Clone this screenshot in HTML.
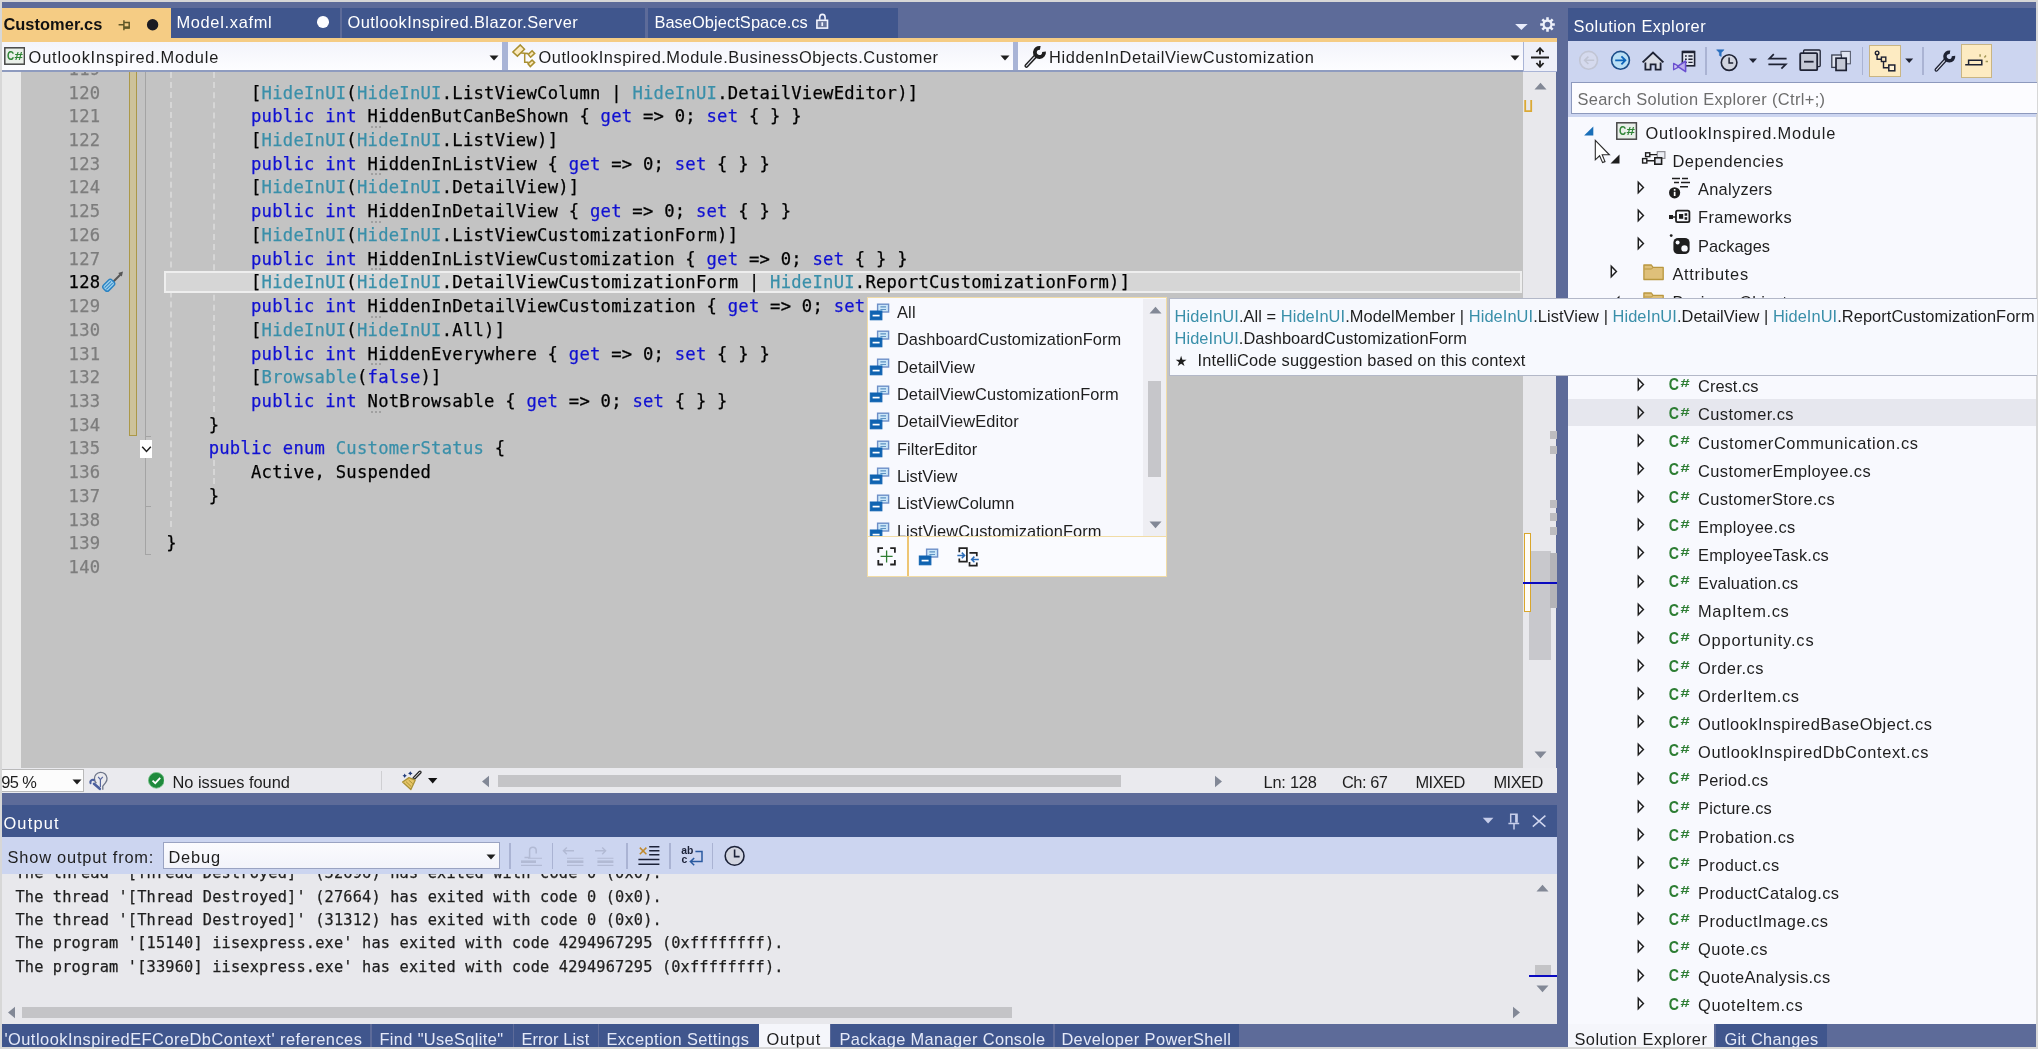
<!DOCTYPE html>
<html lang="en"><head><meta charset="utf-8"><title>Customer.cs - Visual Studio</title><style>
html,body{margin:0;padding:0;}
body{width:2038px;height:1049px;overflow:hidden;background:#d7d7d7;position:relative;font-family:"Liberation Sans", "DejaVu Sans", sans-serif;}
#app{position:absolute;left:0;top:0;width:2038px;height:1049px;overflow:hidden;will-change:transform;}
.b{position:absolute;display:block;}
.t{position:absolute;white-space:pre;display:block;}
.m{font-family:"DejaVu Sans Mono", "Liberation Mono", monospace;-webkit-text-stroke:0.25px currentColor;}
.d{font-family:"DejaVu Sans",sans-serif;}
</style></head>
<body>
<div id="app">
<div class="b" style="left:2.00px;top:2.00px;width:2034.00px;height:1045.00px;background:#5d6b99;"></div>
<div class="b" style="left:2.00px;top:7.50px;width:168.50px;height:34.00px;background:#f5cc84;"></div>
<span class="t" style="left:3.40px;top:13.00px;font-size:16.4px;line-height:22px;color:#111;font-weight:bold;letter-spacing:0.055px;">Customer.cs</span>
<svg class="b" style="left:116.00px;top:17.00px;" width="44.00" height="16.00" viewBox="116.00 17.00 44.00 16.00"><path d="M118.6 24.8 H123.4 M123.9 20.2 V30.2 M123.9 22.4 H129.2 V28 H123.9" fill="none" stroke="#5f5626" stroke-width="1.5"/><path d="M123.9 27.4 H129.2" stroke="#5f5626" stroke-width="2.2"/><circle cx="152.6" cy="24.8" r="5.7" fill="#1a1a22"/></svg>
<div class="b" style="left:170.50px;top:8.00px;width:169.50px;height:30.00px;background:#40568d;"></div>
<span class="t" style="left:176.40px;top:11.00px;font-size:16.4px;line-height:22px;color:#fff;letter-spacing:0.695px;">Model.xafml</span>
<div class="b" style="left:317.10px;top:16.45px;width:11.60px;height:11.60px;background:#fdfdff;border-radius:50%;"></div>
<div class="b" style="left:342.00px;top:8.00px;width:303.00px;height:30.00px;background:#40568d;"></div>
<span class="t" style="left:347.60px;top:11.00px;font-size:16.4px;line-height:22px;color:#fff;letter-spacing:0.440px;">OutlookInspired.Blazor.Server</span>
<div class="b" style="left:648.00px;top:8.00px;width:250.00px;height:30.00px;background:#40568d;"></div>
<span class="t" style="left:654.40px;top:11.00px;font-size:16.4px;line-height:22px;color:#fff;letter-spacing:0.075px;">BaseObjectSpace.cs</span>
<svg class="b" style="left:812.00px;top:11.00px;" width="20.00" height="21.00" viewBox="812.00 11.00 20.00 21.00"><path d="M819.7 19.8 V17.4 A2.7 3 0 0 1 825.1 17.4 V19.8" fill="none" stroke="#f2f4ff" stroke-width="1.6"/><rect x="816.9" y="20.3" width="10.6" height="7.8" fill="#67749a" stroke="#f2f4ff" stroke-width="1.6"/><rect x="821.4" y="22.3" width="1.7" height="3.8" fill="#f2f4ff"/></svg>
<div class="b" style="left:2.00px;top:38.00px;width:1554.50px;height:3.60px;background:#f5cc84;"></div>
<svg class="b" style="left:1513.00px;top:22.00px;" width="17.00" height="10.00" viewBox="1513.00 22.00 17.00 10.00"><path d="M1515.1 23.9 H1527.7 L1521.4 30 Z" fill="#e8ecfb"/></svg>
<svg class="b" style="left:1539.00px;top:15.50px;" width="17" height="17" viewBox="0 0 20 20"><path d="M15.20 10.00 L18.60 10.00 M13.68 13.68 L16.08 16.08 M10.00 15.20 L10.00 18.60 M6.32 13.68 L3.92 16.08 M4.80 10.00 L1.40 10.00 M6.32 6.32 L3.92 3.92 M10.00 4.80 L10.00 1.40 M13.68 6.32 L16.08 3.92" stroke="#eef1fa" stroke-width="3" fill="none"/><circle cx="10" cy="10" r="4.6" fill="none" stroke="#eef1fa" stroke-width="2.6"/></svg>
<div class="b" style="left:2.00px;top:41.60px;width:1554.50px;height:30.40px;background:#a9b4d6;"></div>
<div class="b" style="left:2.00px;top:42.00px;width:499.70px;height:28.00px;background:linear-gradient(#f3f4fb,#fdfdff);border-bottom:1px solid #e4e7f3;"></div>
<div class="b" style="left:508.00px;top:42.00px;width:504.50px;height:28.00px;background:linear-gradient(#f3f4fb,#fdfdff);border-bottom:1px solid #e4e7f3;"></div>
<div class="b" style="left:1018.00px;top:42.00px;width:504.50px;height:28.00px;background:linear-gradient(#f3f4fb,#fdfdff);border-bottom:1px solid #e4e7f3;"></div>
<div class="b" style="left:1524.00px;top:42.00px;width:32.50px;height:29.00px;background:#eef0f9;"></div>
<div class="b" style="left:2.00px;top:70.40px;width:1521.00px;height:1.80px;background:#8e9bbf;"></div>
<svg class="b" style="left:489.00px;top:54.50px;" width="10" height="6" viewBox="0 0 10 6"><path d="M0.5 0.5 L9.5 0.5 L5 5.5 Z" fill="#1e1e1e"/></svg>
<svg class="b" style="left:1000.00px;top:54.50px;" width="10" height="6" viewBox="0 0 10 6"><path d="M0.5 0.5 L9.5 0.5 L5 5.5 Z" fill="#1e1e1e"/></svg>
<svg class="b" style="left:1509.50px;top:54.50px;" width="10" height="6" viewBox="0 0 10 6"><path d="M0.5 0.5 L9.5 0.5 L5 5.5 Z" fill="#1e1e1e"/></svg>
<svg class="b" style="left:4.00px;top:46.50px;" width="21" height="19" viewBox="0 0 21 19"><rect x="0.8" y="0.8" width="19.6" height="16.4" fill="#e9efe9" stroke="#474747" stroke-width="1.5"/><text x="3.1" y="13.4" font-family="Liberation Sans, sans-serif" font-weight="bold" font-size="12.2" fill="#2f8436" textLength="7.2" lengthAdjust="spacingAndGlyphs">C</text><text x="10.4" y="12.5" font-family="Liberation Sans, sans-serif" font-weight="bold" font-size="11.2" fill="#2f8436" textLength="8.4" lengthAdjust="spacingAndGlyphs">#</text></svg>
<span class="t" style="left:28.60px;top:46.00px;font-size:16.4px;line-height:22px;color:#1e1e1e;letter-spacing:0.790px;">OutlookInspired.Module</span>
<svg class="b" style="left:510.00px;top:43.00px;" width="28.00" height="27.00" viewBox="510.00 43.00 28.00 27.00"><g fill="#fbe9bd" stroke="#a98f30" stroke-width="1.5" stroke-linejoin="miter"><path d="M521.2 52.9 L528.3 53.6 M524.7 53.4 V62.2 H528.6" fill="none"/><path d="M520.3 44.9 L524.5 49.3 L517.4 56.1 L512.9 52 Z"/><path d="M532.1 50.8 L534.7 53.4 L530.6 57.2 L528.3 54.4 Z"/><path d="M532.1 60.1 L534.6 62.4 L530.3 66.6 L528 63.8 Z"/></g></svg>
<span class="t" style="left:538.60px;top:46.00px;font-size:16.4px;line-height:22px;color:#1e1e1e;letter-spacing:0.525px;">OutlookInspired.Module.BusinessObjects.Customer</span>
<svg class="b" style="left:1023.00px;top:44.50px;" width="24" height="24" viewBox="0 0 24 24"><path d="M3.4 20.8 L12.8 10.8" stroke="#1e1e1e" stroke-width="4" stroke-linecap="round" fill="none"/><path d="M3.4 20.8 L12.4 11.2" stroke="#e4e6f0" stroke-width="1.2" stroke-linecap="round" fill="none"/><path d="M21 6.7 A4.6 4.6 0 1 1 17.3 2.9" fill="none" stroke="#1e1e1e" stroke-width="3.8"/></svg>
<span class="t" style="left:1049.00px;top:46.00px;font-size:16.4px;line-height:22px;color:#1e1e1e;letter-spacing:0.609px;">HiddenInDetailViewCustomization</span>
<svg class="b" style="left:1530.00px;top:47.00px;" width="20" height="21" viewBox="0 0 20 21"><path d="M1 10.5 H19" stroke="#1e1e1e" stroke-width="2"/><path d="M10 1.5 V7.6 M10 13.4 V19.5" stroke="#1e1e1e" stroke-width="1.8"/><path d="M6.4 5 L10 1.2 L13.6 5 M6.4 16 L10 19.8 L13.6 16" fill="none" stroke="#1e1e1e" stroke-width="1.8"/></svg>
<div class="b" style="left:2px;top:72px;width:1520.8px;height:695.6px;background:#c3c3c3;overflow:hidden;">
<div class="b" style="left:0.00px;top:0.00px;width:19.30px;height:695.60px;background:#eaeaea;"></div>
<div class="b" style="left:127.20px;top:0.00px;width:7.40px;height:364.30px;background:#cdc29a;border-left:1.6px solid #ab9848;border-right:1.6px solid #ab9848;border-bottom:1.6px solid #ab9848;box-sizing:border-box;"></div>
<div class="b" style="left:143.20px;top:0.00px;width:1.30px;height:482.50px;background:#a4a4a4;"></div>
<div class="b" style="left:143.20px;top:364.00px;width:6.20px;height:1.20px;background:#a4a4a4;"></div>
<div class="b" style="left:143.20px;top:434.30px;width:6.20px;height:1.20px;background:#a4a4a4;"></div>
<div class="b" style="left:143.20px;top:482.00px;width:6.20px;height:1.20px;background:#a4a4a4;"></div>
<div class="b" style="left:167.60px;top:0.00px;width:0;height:455.00px;border-left:2px dashed #d6d6d6;"></div>
<div class="b" style="left:210.60px;top:0.00px;width:0;height:340.00px;border-left:2px dashed #d6d6d6;"></div>
<div class="b" style="left:210.60px;top:388.00px;width:0;height:24.00px;border-left:2px dashed #d6d6d6;"></div>
<div class="b" style="left:162.00px;top:199.00px;width:1357.50px;height:21.60px;background:#d6d6d6;border:2px solid #eeeeee;box-sizing:border-box;"></div>
<div class="b" style="left:137.60px;top:367.80px;width:12.60px;height:17.80px;background:#ffffff;"></div>
<svg class="b" style="left:138.60px;top:372.50px;" width="11" height="9" viewBox="0 0 11 9"><path d="M1.2 1.8 L5.5 6.4 L9.8 1.8" fill="none" stroke="#1e1e1e" stroke-width="1.5"/></svg>
<span class="t m" style="left:66.60px;top:-15.00px;font-size:17.2px;line-height:24px;color:#7d7d7d;letter-spacing:0.245px;">119</span>
<span class="t m" style="left:66.60px;top:9.00px;font-size:17.2px;line-height:24px;color:#7d7d7d;letter-spacing:0.245px;">120</span>
<span class="t m" style="left:66.60px;top:32.00px;font-size:17.2px;line-height:24px;color:#7d7d7d;letter-spacing:0.245px;">121</span>
<span class="t m" style="left:66.60px;top:56.00px;font-size:17.2px;line-height:24px;color:#7d7d7d;letter-spacing:0.245px;">122</span>
<span class="t m" style="left:66.60px;top:80.00px;font-size:17.2px;line-height:24px;color:#7d7d7d;letter-spacing:0.245px;">123</span>
<span class="t m" style="left:66.60px;top:103.00px;font-size:17.2px;line-height:24px;color:#7d7d7d;letter-spacing:0.245px;">124</span>
<span class="t m" style="left:66.60px;top:127.00px;font-size:17.2px;line-height:24px;color:#7d7d7d;letter-spacing:0.245px;">125</span>
<span class="t m" style="left:66.60px;top:151.00px;font-size:17.2px;line-height:24px;color:#7d7d7d;letter-spacing:0.245px;">126</span>
<span class="t m" style="left:66.60px;top:175.00px;font-size:17.2px;line-height:24px;color:#7d7d7d;letter-spacing:0.245px;">127</span>
<span class="t m" style="left:66.60px;top:198.00px;font-size:17.2px;line-height:24px;color:#000;letter-spacing:0.245px;">128</span>
<span class="t m" style="left:66.60px;top:222.00px;font-size:17.2px;line-height:24px;color:#7d7d7d;letter-spacing:0.245px;">129</span>
<span class="t m" style="left:66.60px;top:246.00px;font-size:17.2px;line-height:24px;color:#7d7d7d;letter-spacing:0.245px;">130</span>
<span class="t m" style="left:66.60px;top:270.00px;font-size:17.2px;line-height:24px;color:#7d7d7d;letter-spacing:0.245px;">131</span>
<span class="t m" style="left:66.60px;top:293.00px;font-size:17.2px;line-height:24px;color:#7d7d7d;letter-spacing:0.245px;">132</span>
<span class="t m" style="left:66.60px;top:317.00px;font-size:17.2px;line-height:24px;color:#7d7d7d;letter-spacing:0.245px;">133</span>
<span class="t m" style="left:66.60px;top:341.00px;font-size:17.2px;line-height:24px;color:#7d7d7d;letter-spacing:0.245px;">134</span>
<span class="t m" style="left:66.60px;top:364.00px;font-size:17.2px;line-height:24px;color:#7d7d7d;letter-spacing:0.245px;">135</span>
<span class="t m" style="left:66.60px;top:388.00px;font-size:17.2px;line-height:24px;color:#7d7d7d;letter-spacing:0.245px;">136</span>
<span class="t m" style="left:66.60px;top:412.00px;font-size:17.2px;line-height:24px;color:#7d7d7d;letter-spacing:0.245px;">137</span>
<span class="t m" style="left:66.60px;top:436.00px;font-size:17.2px;line-height:24px;color:#7d7d7d;letter-spacing:0.245px;">138</span>
<span class="t m" style="left:66.60px;top:459.00px;font-size:17.2px;line-height:24px;color:#7d7d7d;letter-spacing:0.245px;">139</span>
<span class="t m" style="left:66.60px;top:483.00px;font-size:17.2px;line-height:24px;color:#7d7d7d;letter-spacing:0.245px;">140</span>
<svg class="b" style="left:99.00px;top:198.00px;" width="24" height="24" viewBox="0 0 24 24"><path d="M12.5 11.5 L20.5 3.5" stroke="#555" stroke-width="2"/><path d="M17.2 3 L22 1.4 L20.8 6.4 Z" fill="#555"/><g transform="rotate(45 8 15)"><rect x="4.2" y="9.4" width="7.6" height="12" rx="2.6" fill="#9dd0ee" stroke="#2b83c2" stroke-width="1.5"/><path d="M6.8 11 V20 M9.2 11 V20" stroke="#2b83c2" stroke-width="1"/></g></svg>
<span class="t m" style="left:121.90px;top:9.00px;font-size:17.2px;line-height:24px;color:#000;letter-spacing:0.245px;">            [<span style="color:#398fa9">HideInUI</span>(<span style="color:#398fa9">HideInUI</span>.ListViewColumn | <span style="color:#398fa9">HideInUI</span>.DetailViewEditor)]</span>
<span class="t m" style="left:121.90px;top:32.00px;font-size:17.2px;line-height:24px;color:#000;letter-spacing:0.245px;">            <span style="color:#1010d2">public</span> <span style="color:#1010d2">int</span> HiddenButCanBeShown { <span style="color:#1010d2">get</span> =&gt; 0; <span style="color:#1010d2">set</span> { } }</span>
<span class="t m" style="left:121.90px;top:56.00px;font-size:17.2px;line-height:24px;color:#000;letter-spacing:0.245px;">            [<span style="color:#398fa9">HideInUI</span>(<span style="color:#398fa9">HideInUI</span>.ListView)]</span>
<span class="t m" style="left:121.90px;top:80.00px;font-size:17.2px;line-height:24px;color:#000;letter-spacing:0.245px;">            <span style="color:#1010d2">public</span> <span style="color:#1010d2">int</span> HiddenInListView { <span style="color:#1010d2">get</span> =&gt; 0; <span style="color:#1010d2">set</span> { } }</span>
<span class="t m" style="left:121.90px;top:103.00px;font-size:17.2px;line-height:24px;color:#000;letter-spacing:0.245px;">            [<span style="color:#398fa9">HideInUI</span>(<span style="color:#398fa9">HideInUI</span>.DetailView)]</span>
<span class="t m" style="left:121.90px;top:127.00px;font-size:17.2px;line-height:24px;color:#000;letter-spacing:0.245px;">            <span style="color:#1010d2">public</span> <span style="color:#1010d2">int</span> HiddenInDetailView { <span style="color:#1010d2">get</span> =&gt; 0; <span style="color:#1010d2">set</span> { } }</span>
<span class="t m" style="left:121.90px;top:151.00px;font-size:17.2px;line-height:24px;color:#000;letter-spacing:0.245px;">            [<span style="color:#398fa9">HideInUI</span>(<span style="color:#398fa9">HideInUI</span>.ListViewCustomizationForm)]</span>
<span class="t m" style="left:121.90px;top:175.00px;font-size:17.2px;line-height:24px;color:#000;letter-spacing:0.245px;">            <span style="color:#1010d2">public</span> <span style="color:#1010d2">int</span> HiddenInListViewCustomization { <span style="color:#1010d2">get</span> =&gt; 0; <span style="color:#1010d2">set</span> { } }</span>
<span class="t m" style="left:121.90px;top:198.00px;font-size:17.2px;line-height:24px;color:#000;letter-spacing:0.245px;">            [<span style="color:#398fa9">HideInUI</span>(<span style="color:#398fa9">HideInUI</span>.DetailViewCustomizationForm | <span style="color:#398fa9">HideInUI</span>.ReportCustomizationForm)]</span>
<span class="t m" style="left:121.90px;top:222.00px;font-size:17.2px;line-height:24px;color:#000;letter-spacing:0.245px;">            <span style="color:#1010d2">public</span> <span style="color:#1010d2">int</span> HiddenInDetailViewCustomization { <span style="color:#1010d2">get</span> =&gt; 0; <span style="color:#1010d2">set</span> { } }</span>
<span class="t m" style="left:121.90px;top:246.00px;font-size:17.2px;line-height:24px;color:#000;letter-spacing:0.245px;">            [<span style="color:#398fa9">HideInUI</span>(<span style="color:#398fa9">HideInUI</span>.All)]</span>
<span class="t m" style="left:121.90px;top:270.00px;font-size:17.2px;line-height:24px;color:#000;letter-spacing:0.245px;">            <span style="color:#1010d2">public</span> <span style="color:#1010d2">int</span> HiddenEverywhere { <span style="color:#1010d2">get</span> =&gt; 0; <span style="color:#1010d2">set</span> { } }</span>
<span class="t m" style="left:121.90px;top:293.00px;font-size:17.2px;line-height:24px;color:#000;letter-spacing:0.245px;">            [<span style="color:#398fa9">Browsable</span>(<span style="color:#1010d2">false</span>)]</span>
<span class="t m" style="left:121.90px;top:317.00px;font-size:17.2px;line-height:24px;color:#000;letter-spacing:0.245px;">            <span style="color:#1010d2">public</span> <span style="color:#1010d2">int</span> NotBrowsable { <span style="color:#1010d2">get</span> =&gt; 0; <span style="color:#1010d2">set</span> { } }</span>
<span class="t m" style="left:121.90px;top:341.00px;font-size:17.2px;line-height:24px;color:#000;letter-spacing:0.245px;">        }</span>
<span class="t m" style="left:121.90px;top:364.00px;font-size:17.2px;line-height:24px;color:#000;letter-spacing:0.245px;">        <span style="color:#1010d2">public</span> <span style="color:#1010d2">enum</span> <span style="color:#398fa9">CustomerStatus</span> {</span>
<span class="t m" style="left:121.90px;top:388.00px;font-size:17.2px;line-height:24px;color:#000;letter-spacing:0.245px;">            Active, Suspended</span>
<span class="t m" style="left:121.90px;top:412.00px;font-size:17.2px;line-height:24px;color:#000;letter-spacing:0.245px;">        }</span>
<span class="t m" style="left:121.90px;top:459.00px;font-size:17.2px;line-height:24px;color:#000;letter-spacing:0.245px;">    }</span>
<div class="b" style="left:368.50px;top:53.92px;width:10px;height:0;border-top:2px dotted #a0a0a0;"></div>
<div class="b" style="left:368.50px;top:101.36px;width:10px;height:0;border-top:2px dotted #a0a0a0;"></div>
<div class="b" style="left:368.50px;top:148.80px;width:10px;height:0;border-top:2px dotted #a0a0a0;"></div>
<div class="b" style="left:368.50px;top:196.24px;width:10px;height:0;border-top:2px dotted #a0a0a0;"></div>
<div class="b" style="left:368.50px;top:243.68px;width:10px;height:0;border-top:2px dotted #a0a0a0;"></div>
<div class="b" style="left:368.50px;top:291.12px;width:10px;height:0;border-top:2px dotted #a0a0a0;"></div>
<div class="b" style="left:368.50px;top:338.56px;width:10px;height:0;border-top:2px dotted #a0a0a0;"></div>
</div>
<div class="b" style="left:1522.80px;top:72.00px;width:33.70px;height:696.00px;background:#e8e8ec;"></div>
<svg class="b" style="left:1533.50px;top:82.00px;" width="13" height="8" viewBox="0 0 13 8"><path d="M0.5 7.5 L6.5 0.8 L12.5 7.5 Z" fill="#828896"/></svg>
<svg class="b" style="left:1533.50px;top:751.00px;" width="13" height="8" viewBox="0 0 13 8"><path d="M0.5 0.5 L6.5 7.2 L12.5 0.5 Z" fill="#828896"/></svg>
<svg class="b" style="left:1523.50px;top:100.00px;" width="9" height="13" viewBox="0 0 9 13"><path d="M1.2 0 V11.2 H7.2 V0" fill="none" stroke="#dba935" stroke-width="1.8"/></svg>
<div class="b" style="left:1550.00px;top:431.00px;width:6.50px;height:8.00px;background:#bdbdc0;"></div>
<div class="b" style="left:1550.00px;top:446.00px;width:6.50px;height:8.00px;background:#bdbdc0;"></div>
<div class="b" style="left:1550.00px;top:500.00px;width:6.50px;height:8.00px;background:#bdbdc0;"></div>
<div class="b" style="left:1550.00px;top:513.00px;width:6.50px;height:7.50px;background:#bdbdc0;"></div>
<div class="b" style="left:1550.00px;top:527.00px;width:6.50px;height:8.00px;background:#bdbdc0;"></div>
<div class="b" style="left:1529.00px;top:551.00px;width:22.00px;height:109.00px;background:#c8c8cc;"></div>
<div class="b" style="left:1550.00px;top:553.00px;width:6.50px;height:55.00px;background:#b4b4b8;"></div>
<div class="b" style="left:1524.20px;top:533.00px;width:7.00px;height:79.00px;background:#fffdf6;border:1.5px solid #d9a62c;box-sizing:border-box;"></div>
<div class="b" style="left:1523.00px;top:581.80px;width:33.50px;height:2.60px;background:#0a0ac0;"></div>
<div class="b" style="left:2.00px;top:767.60px;width:1554.50px;height:25.30px;background:#eaeaee;"></div>
<div class="b" style="left:2.00px;top:769.00px;width:82.00px;height:23.20px;background:#fcfcfc;border:1px solid #b9b9b9;border-left:none;box-sizing:border-box;"></div>
<span class="t" style="left:1.20px;top:771.00px;font-size:16.4px;line-height:22px;color:#1e1e1e;letter-spacing:-0.590px;">95 %</span>
<svg class="b" style="left:72.00px;top:778.50px;" width="10" height="6" viewBox="0 0 10 6"><path d="M0.5 0.5 L9.5 0.5 L5 5.5 Z" fill="#1e1e1e"/></svg>
<svg class="b" style="left:88.00px;top:769.00px;" width="22.00" height="23.00" viewBox="88.00 769.00 22.00 23.00"><path d="M96.4 783.2 A6.3 6.3 0 1 1 105.6 782.6 L102.8 786.2 V789.8" fill="none" stroke="#6d7589" stroke-width="1.3"/><path d="M98.2 776.8 L100.4 779.6 L102.8 776.8 M100.4 779.6 V787" fill="none" stroke="#56669e" stroke-width="1.2"/><path d="M94 783.8 L99.8 788.8" stroke="#4b5f9e" stroke-width="2.6" stroke-linecap="round"/><path d="M94.6 780.6 A2.4 2.4 0 1 0 91 783.9" fill="none" stroke="#4b5f9e" stroke-width="2.1"/></svg>
<svg class="b" style="left:147.80px;top:772.30px;" width="16.6" height="16.6" viewBox="0 0 16 16"><circle cx="8" cy="8" r="7.6" fill="#1f8a3c"/><circle cx="8" cy="8" r="7.6" fill="none" stroke="#7ac58b" stroke-width="0.8"/><path d="M4.4 8.2 L7 10.8 L11.8 5.6" fill="none" stroke="#fff" stroke-width="1.7"/></svg>
<span class="t" style="left:172.40px;top:771.00px;font-size:16.4px;line-height:22px;color:#1e1e1e;letter-spacing:-0.003px;">No issues found</span>
<div class="b" style="left:381.00px;top:771.00px;width:1.00px;height:19.00px;background:#cfcfd2;"></div>
<svg class="b" style="left:400.00px;top:769.00px;" width="40.00" height="23.00" viewBox="400.00 769.00 40.00 23.00"><path d="M420 772.2 L414 778.4" stroke="#2b2b2b" stroke-width="3.4" stroke-linecap="round"/><path d="M420 772.2 L414.4 778" stroke="#f4f4f4" stroke-width="1" stroke-linecap="round"/><path d="M409 777.6 L415.2 780.2 L410.8 789.6 L402.6 782 Z" fill="#e6c566" stroke="#ab9338" stroke-width="1.3" stroke-linejoin="round"/><path d="M406 781.6 L411 786.4 M408.6 780 L412.6 783.6" stroke="#ab9338" stroke-width="1"/><path d="M410.3 771.2 L411.1 772.6 L412.5 773.4 L411.1 774.2 L410.3 775.6 L409.5 774.2 L408.1 773.4 L409.5 772.6 Z" fill="#1f3a7a"/><path d="M404.7 773.5 L405.5 774.9 L406.9 775.7 L405.5 776.5 L404.7 777.9 L403.9 776.5 L402.5 775.7 L403.9 774.9 Z" fill="#1f3a7a"/><path d="M428 778 H437.4 L432.7 783.6 Z" fill="#111"/></svg>
<svg class="b" style="left:481.00px;top:775.00px;" width="9" height="13" viewBox="0 0 9 13"><path d="M8 0.8 L1 6.5 L8 12.2 Z" fill="#828896"/></svg>
<div class="b" style="left:498.00px;top:775.30px;width:623.00px;height:11.60px;background:#c4c4c7;"></div>
<svg class="b" style="left:1214.00px;top:775.00px;" width="9" height="13" viewBox="0 0 9 13"><path d="M1 0.8 L8 6.5 L1 12.2 Z" fill="#828896"/></svg>
<span class="t" style="left:1263.60px;top:771.00px;font-size:16.4px;line-height:22px;color:#1e1e1e;letter-spacing:-0.241px;">Ln: 128</span>
<span class="t" style="left:1342.00px;top:771.00px;font-size:16.4px;line-height:22px;color:#1e1e1e;letter-spacing:-0.466px;">Ch: 67</span>
<span class="t" style="left:1415.40px;top:771.00px;font-size:16.4px;line-height:22px;color:#1e1e1e;letter-spacing:-0.484px;">MIXED</span>
<span class="t" style="left:1493.40px;top:771.00px;font-size:16.4px;line-height:22px;color:#1e1e1e;letter-spacing:-0.484px;">MIXED</span>
<div class="b" style="left:2.00px;top:805.00px;width:1554.50px;height:32.30px;background:#40568d;"></div>
<span class="t" style="left:3.40px;top:812.00px;font-size:16.4px;line-height:22px;color:#fff;letter-spacing:1.214px;">Output</span>
<svg class="b" style="left:1480.00px;top:810.00px;" width="70.00" height="22.00" viewBox="1480.00 810.00 70.00 22.00"><path d="M1482.8 817.8 H1493.4 L1488.1 823.5 Z" fill="#c6cdea"/><path d="M1510.7 822.6 V814.2 H1517 V822.6 M1508.4 823.4 H1519.2 M1514 824 V829.6" fill="none" stroke="#c6cdea" stroke-width="1.5"/><path d="M1516.2 814.2 V822.6" stroke="#c6cdea" stroke-width="2.2"/><path d="M1532.8 815.6 L1545.4 826.6 M1545.4 815.6 L1532.8 826.6" stroke="#d0d6ef" stroke-width="1.5" fill="none"/></svg>
<div class="b" style="left:2px;top:873px;width:1554.5px;height:151px;background:#e8e8ec;overflow:hidden;">
<span class="t m" style="left:13.40px;top:-11.00px;font-size:15.3px;line-height:22px;color:#1e1e1e;letter-spacing:0.16px;">The thread '[Thread Destroyed]' (32696) has exited with code 0 (0x0).</span>
<span class="t m" style="left:13.40px;top:13.00px;font-size:15.3px;line-height:22px;color:#1e1e1e;letter-spacing:0.16px;">The thread '[Thread Destroyed]' (27664) has exited with code 0 (0x0).</span>
<span class="t m" style="left:13.40px;top:36.00px;font-size:15.3px;line-height:22px;color:#1e1e1e;letter-spacing:0.16px;">The thread '[Thread Destroyed]' (31312) has exited with code 0 (0x0).</span>
<span class="t m" style="left:13.40px;top:59.00px;font-size:15.3px;line-height:22px;color:#1e1e1e;letter-spacing:0.16px;">The program '[15140] iisexpress.exe' has exited with code 4294967295 (0xffffffff).</span>
<span class="t m" style="left:13.40px;top:83.00px;font-size:15.3px;line-height:22px;color:#1e1e1e;letter-spacing:0.16px;">The program '[33960] iisexpress.exe' has exited with code 4294967295 (0xffffffff).</span>
</div>
<div class="b" style="left:2.00px;top:837.30px;width:1554.50px;height:36.50px;background:#ccd5f0;"></div>
<span class="t" style="left:7.60px;top:846.00px;font-size:16.4px;line-height:22px;color:#1e1e1e;letter-spacing:0.793px;">Show output from:</span>
<div class="b" style="left:163.30px;top:841.70px;width:337.00px;height:27.40px;background:linear-gradient(#fbfbfe,#f2f3fa);border:1px solid #9aa3c2;box-sizing:border-box;"></div>
<span class="t" style="left:168.40px;top:846.00px;font-size:16.4px;line-height:22px;color:#1e1e1e;letter-spacing:0.838px;">Debug</span>
<svg class="b" style="left:486.00px;top:853.50px;" width="10" height="6" viewBox="0 0 10 6"><path d="M0.5 0.5 L9.5 0.5 L5 5.5 Z" fill="#1e1e1e"/></svg>
<div class="b" style="left:509.40px;top:843.00px;width:1.30px;height:26.00px;background:#aab3d3;"></div>
<div class="b" style="left:551.90px;top:843.00px;width:1.30px;height:26.00px;background:#aab3d3;"></div>
<div class="b" style="left:626.40px;top:843.00px;width:1.30px;height:26.00px;background:#aab3d3;"></div>
<div class="b" style="left:669.40px;top:843.00px;width:1.30px;height:26.00px;background:#aab3d3;"></div>
<div class="b" style="left:711.90px;top:843.00px;width:1.30px;height:26.00px;background:#aab3d3;"></div>
<svg class="b" style="left:518.00px;top:843.00px;" width="228.00" height="27.00" viewBox="518.00 843.00 228.00 27.00"><path d="M524.5 857.6 H529.6 V850.6 A3.3 3.3 0 0 1 536.2 850.6 V853.4" fill="none" stroke="#b2bad4" stroke-width="1.5"/><path d="M528 858.3 H542 M521 865.4 H542" stroke="#b2bad4" stroke-width="1.1"/><path d="M521 861.7 H536" stroke="#b2bad4" stroke-width="2.6"/><path d="M563.4 850.8 H574 M566.8 847.4 L563.4 850.8 L566.8 854.2" fill="none" stroke="#b2bad4" stroke-width="1.4"/><path d="M567 858.3 H583.4 M567 865.4 H583.4" stroke="#b2bad4" stroke-width="1.1"/><path d="M567 861.7 H583.4" stroke="#b2bad4" stroke-width="2.6"/><path d="M595 850.8 H605.6 M602.2 847.4 L605.6 850.8 L602.2 854.2" fill="none" stroke="#b2bad4" stroke-width="1.4"/><path d="M597.4 858.3 H613.4 M597.4 865.4 H613.4" stroke="#b2bad4" stroke-width="1.1"/><path d="M597.4 861.7 H613.4" stroke="#b2bad4" stroke-width="2.6"/><path d="M639.8 847.6 L646.4 854.2 M646.4 847.6 L639.8 854.2" stroke="#c08a2e" stroke-width="1.5" fill="none"/><path d="M649.2 846.8 H659.4 M649.2 850.8 H659.4 M649.2 854.8 H659.4 M638.4 859.5 H659.4 M638.4 864.2 H659.4" stroke="#1c2238" stroke-width="1.6"/><text x="681.2" y="854.2" font-family="Liberation Sans, sans-serif" font-weight="bold" font-size="10.4" fill="#1c2238">ab</text><text x="681.4" y="863" font-family="Liberation Sans, sans-serif" font-weight="bold" font-size="10.4" fill="#1c2238">c</text><path d="M695.4 851.4 H702 V861.6 H690.6 M694.2 858 L690.4 861.6 L694.2 865.2" fill="none" stroke="#2a5aa0" stroke-width="1.5"/><circle cx="734.6" cy="855.9" r="9.4" fill="#d2d5e0" stroke="#1c2238" stroke-width="1.6"/><path d="M734.6 849.6 V856.6 H739.6" fill="none" stroke="#1c2238" stroke-width="1.6"/></svg>
<svg class="b" style="left:1536.20px;top:884.00px;" width="13" height="8" viewBox="0 0 13 8"><path d="M0.5 7.5 L6.5 0.8 L12.5 7.5 Z" fill="#828896"/></svg>
<svg class="b" style="left:1536.20px;top:984.50px;" width="13" height="8" viewBox="0 0 13 8"><path d="M0.5 0.5 L6.5 7.2 L12.5 0.5 Z" fill="#828896"/></svg>
<div class="b" style="left:1535.00px;top:964.50px;width:16.00px;height:10.50px;background:#c4c4c7;"></div>
<div class="b" style="left:1529.00px;top:974.80px;width:27.50px;height:2.60px;background:#0a0ac0;"></div>
<svg class="b" style="left:6.50px;top:1006.00px;" width="9" height="13" viewBox="0 0 9 13"><path d="M8 0.8 L1 6.5 L8 12.2 Z" fill="#828896"/></svg>
<svg class="b" style="left:1512.00px;top:1006.00px;" width="9" height="13" viewBox="0 0 9 13"><path d="M1 0.8 L8 6.5 L1 12.2 Z" fill="#828896"/></svg>
<div class="b" style="left:22.00px;top:1007.20px;width:990.00px;height:11.00px;background:#c4c4c7;"></div>
<div class="b" style="left:2px;top:1024px;width:2034px;height:23px;overflow:hidden;">
</div>
<div class="b" style="left:2.00px;top:1024.00px;width:368.00px;height:23.00px;background:#40568d;"></div><span class="t" style="left:4.40px;top:1028.00px;font-size:16.4px;line-height:22px;color:#e4e9f8;letter-spacing:0.489px;clip-path:inset(0 0 2.4px 0);">'OutlookInspiredEFCoreDbContext' references</span>
<div class="b" style="left:372.00px;top:1024.00px;width:140.50px;height:23.00px;background:#40568d;"></div><span class="t" style="left:379.40px;top:1028.00px;font-size:16.4px;line-height:22px;color:#e4e9f8;letter-spacing:0.360px;clip-path:inset(0 0 2.4px 0);">Find "UseSqlite"</span>
<div class="b" style="left:514.00px;top:1024.00px;width:83.50px;height:23.00px;background:#40568d;"></div><span class="t" style="left:521.40px;top:1028.00px;font-size:16.4px;line-height:22px;color:#e4e9f8;letter-spacing:0.152px;clip-path:inset(0 0 2.4px 0);">Error List</span>
<div class="b" style="left:599.00px;top:1024.00px;width:159.60px;height:23.00px;background:#40568d;"></div><span class="t" style="left:606.40px;top:1028.00px;font-size:16.4px;line-height:22px;color:#e4e9f8;letter-spacing:0.402px;clip-path:inset(0 0 2.4px 0);">Exception Settings</span>
<div class="b" style="left:759.00px;top:1024.00px;width:70.60px;height:23.00px;background:#f5f6fb;"></div><span class="t" style="left:766.40px;top:1028.00px;font-size:16.4px;line-height:22px;color:#1e1e1e;letter-spacing:0.964px;clip-path:inset(0 0 2.4px 0);">Output</span>
<div class="b" style="left:830.60px;top:1024.00px;width:222.40px;height:23.00px;background:#40568d;"></div><span class="t" style="left:839.40px;top:1028.00px;font-size:16.4px;line-height:22px;color:#e4e9f8;letter-spacing:0.359px;clip-path:inset(0 0 2.4px 0);">Package Manager Console</span>
<div class="b" style="left:1055.00px;top:1024.00px;width:184.00px;height:23.00px;background:#40568d;"></div><span class="t" style="left:1061.40px;top:1028.00px;font-size:16.4px;line-height:22px;color:#e4e9f8;letter-spacing:0.391px;clip-path:inset(0 0 2.4px 0);">Developer PowerShell</span>
<div class="b" style="left:1568.00px;top:8.30px;width:468.00px;height:32.50px;background:#40568d;"></div>
<span class="t" style="left:1573.60px;top:15.00px;font-size:16.4px;line-height:22px;color:#fff;letter-spacing:0.451px;">Solution Explorer</span>
<div class="b" style="left:1568.00px;top:40.80px;width:468.00px;height:76.40px;background:#ccd5f0;"></div>
<div class="b" style="left:1568.00px;top:117.00px;width:468.00px;height:907.00px;background:#f8f9fe;"></div>
<div class="b" style="left:1705.40px;top:47.00px;width:1.30px;height:28.00px;background:#aab3d3;"></div>
<svg class="b" style="left:1576.00px;top:44.00px;" width="216.00" height="34.00" viewBox="1576.00 44.00 216.00 34.00"><circle cx="1588.6" cy="60.3" r="8.9" fill="#d5daee" stroke="#c1c5d4" stroke-width="1.6"/><path d="M1594.2 60.3 H1584.8 M1588.4 56.6 L1584.6 60.3 L1588.4 64" fill="none" stroke="#c1c5d4" stroke-width="1.6"/><circle cx="1620.5" cy="60.3" r="8.9" fill="#badff5" stroke="#1d4e89" stroke-width="1.6"/><path d="M1615.2 60.3 H1625 M1621.4 56.3 L1625.4 60.3 L1621.4 64.3" fill="none" stroke="#0b63ba" stroke-width="1.8"/><path d="M1645.4 61 V69.6 H1650.6 V64.4 H1655.6 V69.6 H1660.6 V61" fill="#d9dce6" stroke="#1e2233" stroke-width="1.8"/><path d="M1642.6 62.4 L1653 52.6 L1663.4 62.4" fill="#d9dce6" stroke="#1e2233" stroke-width="1.9"/><rect x="1682.4" y="51.6" width="12.2" height="14.2" fill="#e4e7f1" stroke="#1e2233" stroke-width="1.6"/><path d="M1682.4 52 H1694.6" stroke="#1e2233" stroke-width="2.4"/><path d="M1685 56 H1686.8 M1688.4 56 H1692.6 M1685 59.2 H1686.8 M1688.4 59.2 H1692.6 M1685 62.4 H1686.8 M1688.4 62.4 H1692.6" stroke="#1e2233" stroke-width="1.4"/><path d="M1673.6 63.4 V69.8 L1679.4 66.6 Z" fill="#cfc6f2" stroke="#6a50d0" stroke-width="1.3" stroke-linejoin="round"/><path d="M1685.6 61 V71.6 L1677.6 66.4 Z" fill="#b9aaec" stroke="#6a50d0" stroke-width="1.6" stroke-linejoin="round"/><path d="M1716.6 49.8 H1724 L1721.2 52.8 V56.4 L1719.4 55.4 V52.8 Z" fill="#2a6fbe" stroke="#2a6fbe" stroke-width="0.6"/><circle cx="1729.1" cy="62.6" r="7.8" fill="#d1d4df" stroke="#1e2233" stroke-width="1.6"/><path d="M1729.1 57.6 V63 H1733.2" fill="none" stroke="#1e2233" stroke-width="1.5"/><path d="M1749 58.6 H1757 L1753 63.1 Z" fill="#1e2233"/><path d="M1786.6 58.6 H1769.4 L1773.8 54.2 M1768.4 64.3 H1785.8 L1781.4 68.7" fill="none" stroke="#1e2233" stroke-width="1.7"/></svg>
<div class="b" style="left:1868.80px;top:45.20px;width:32.00px;height:31.40px;background:#fdebc2;border:1px solid #c9b583;box-sizing:border-box;"></div>
<div class="b" style="left:1960.50px;top:44.20px;width:31.40px;height:33.40px;background:#fdebc2;border:1px solid #c9b583;box-sizing:border-box;"></div>
<div class="b" style="left:1861.50px;top:47.00px;width:1.30px;height:28.00px;background:#aab3d3;"></div>
<div class="b" style="left:1922.30px;top:47.00px;width:1.30px;height:28.00px;background:#aab3d3;"></div>
<svg class="b" style="left:1796.00px;top:44.00px;" width="198.00" height="34.00" viewBox="1796.00 44.00 198.00 34.00"><rect x="1803.6" y="50" width="16.6" height="16.6" rx="1" fill="#d3d7e4" stroke="#1e2233" stroke-width="1.3"/><rect x="1800.2" y="53.2" width="17" height="17" rx="1" fill="#c5c9d6" stroke="#1e2233" stroke-width="1.8"/><path d="M1804 61.7 H1813.6" stroke="#1e2233" stroke-width="1.8"/><rect x="1841" y="51.4" width="9.4" height="12.4" fill="#e1e5f1" stroke="#5a5f70" stroke-width="1.1"/><rect x="1831.8" y="55" width="9.6" height="12.4" fill="#e1e5f1" stroke="#3a3f50" stroke-width="1.3"/><rect x="1836" y="58.2" width="10.2" height="12.2" fill="#c5c9d6" stroke="#1e2233" stroke-width="1.7"/><circle cx="1877.1" cy="52.9" r="1.8" fill="#fdebc2" stroke="#1e2233" stroke-width="1.4"/><path d="M1877.1 54.8 V59.3 H1881.2 M1883.5 61.6 V67.8 H1888.4" fill="none" stroke="#1e2233" stroke-width="1.4"/><rect x="1881.4" y="57.1" width="4.4" height="4.4" fill="#fdebc2" stroke="#1e2233" stroke-width="1.4"/><rect x="1888.8" y="65" width="6" height="5.8" fill="#fff3d6" stroke="#1e2233" stroke-width="1.5"/><path d="M1905.2 58.4 H1913.2 L1909.2 62.9 Z" fill="#1e2233"/><path d="M1936.4 69.8 L1945.8 59.4" stroke="#1e2233" stroke-width="3.8" stroke-linecap="round"/><path d="M1936.4 69.8 L1945.4 59.8" stroke="#dfe3f2" stroke-width="1.1" stroke-linecap="round"/><path d="M1953.5 55.9 A4.3 4.3 0 1 1 1950 52.3" fill="none" stroke="#1e2233" stroke-width="3.5"/><path d="M1965.2 64.7 H1981.8 V60.2 H1968.6 V64.7" fill="none" stroke="#1e2233" stroke-width="1.5"/><path d="M1980.1 54.2 V56.8 M1986 55.6 L1984.4 57.4 M1985.6 61.6 H1988" stroke="#a39757" stroke-width="1.5"/></svg>
<div class="b" style="left:1571.20px;top:81.80px;width:466.00px;height:31.80px;background:#fcfcff;border:1px solid #8d99bd;border-right:none;box-sizing:border-box;"></div>
<span class="t" style="left:1577.40px;top:88.00px;font-size:16.4px;line-height:22px;color:#6d6d6d;letter-spacing:0.351px;">Search Solution Explorer (Ctrl+;)</span>
<div class="b" style="left:1568.00px;top:398.80px;width:468.00px;height:27.64px;background:#e6e7ee;"></div>
<svg class="b" style="left:1584.00px;top:126.20px;" width="10" height="10" viewBox="0 0 10 10"><path d="M9.3 0.4 V9.6 H0.1 Z" fill="#1a6fb8"/></svg>
<svg class="b" style="left:1616.00px;top:122.30px;" width="22" height="19" viewBox="0 0 22 19"><rect x="0.8" y="0.8" width="19.6" height="16.4" fill="#e9efe9" stroke="#474747" stroke-width="1.5"/><text x="3.1" y="13.4" font-family="Liberation Sans, sans-serif" font-weight="bold" font-size="12.2" fill="#2f8436" textLength="7.2" lengthAdjust="spacingAndGlyphs">C</text><text x="10.4" y="12.5" font-family="Liberation Sans, sans-serif" font-weight="bold" font-size="11.2" fill="#2f8436" textLength="8.4" lengthAdjust="spacingAndGlyphs">#</text></svg>
<span class="t" style="left:1645.40px;top:122.00px;font-size:16.4px;line-height:22px;color:#1e1e1e;letter-spacing:0.799px;">OutlookInspired.Module</span>
<svg class="b" style="left:1610.00px;top:154.34px;" width="10" height="10" viewBox="0 0 10 10"><path d="M9.5 0.5 V9.5 H0.5 Z" fill="#1e1e1e"/></svg>
<svg class="b" style="left:1640.50px;top:151.34px;" width="26" height="18" viewBox="0 0 26 18"><rect x="16.3" y="0.6" width="7.6" height="6.8" fill="#eceef5" stroke="#8f8f96" stroke-width="1.2"/><path d="M9 3.6 H16 M5.8 9.8 H13.2" stroke="#1e1e1e" stroke-width="1.4"/><rect x="4.6" y="1.8" width="4.2" height="3.8" fill="#f8f9fe" stroke="#1e1e1e" stroke-width="1.4"/><rect x="1.6" y="7.6" width="4.2" height="4.4" fill="#f8f9fe" stroke="#1e1e1e" stroke-width="1.4"/><rect x="13.8" y="6.8" width="6.8" height="6.4" fill="#e3e5ee" stroke="#1e1e1e" stroke-width="1.6"/></svg>
<span class="t" style="left:1672.40px;top:150.00px;font-size:16.4px;line-height:22px;color:#1e1e1e;letter-spacing:0.559px;">Dependencies</span>
<svg class="b" style="left:1636.80px;top:179.58px;" width="9" height="15" viewBox="0 0 9 15"><path d="M1.3 2.3 L6.4 7.5 L1.3 12.7 Z" fill="none" stroke="#1e1e1e" stroke-width="1.5" stroke-linejoin="miter"/></svg>
<svg class="b" style="left:1667.00px;top:176.48px;" width="24" height="24" viewBox="0 0 24 24"><path d="M5 2.4 H13 M15 2.4 H21 M7 6.6 H12 M14 6.6 H23 M13 10.8 H21" stroke="#1e1e1e" stroke-width="1.5"/><circle cx="7.6" cy="16.8" r="5.6" fill="#1e1e1e"/><rect x="6.8" y="15.8" width="1.7" height="4.2" fill="#fff"/><rect x="6.8" y="13" width="1.7" height="1.7" fill="#fff"/></svg>
<span class="t" style="left:1698.00px;top:178.00px;font-size:16.4px;line-height:22px;color:#1e1e1e;letter-spacing:0.281px;">Analyzers</span>
<svg class="b" style="left:1636.80px;top:207.72px;" width="9" height="15" viewBox="0 0 9 15"><path d="M1.3 2.3 L6.4 7.5 L1.3 12.7 Z" fill="none" stroke="#1e1e1e" stroke-width="1.5" stroke-linejoin="miter"/></svg>
<svg class="b" style="left:1667.00px;top:206.62px;" width="24" height="20" viewBox="0 0 24 20"><rect x="2" y="8" width="4" height="4" fill="#1e1e1e"/><path d="M6 10 H9" stroke="#1e1e1e" stroke-width="1.4"/><rect x="9" y="3.6" width="13.4" height="11.6" rx="1.6" fill="#f8f9fe" stroke="#1e1e1e" stroke-width="1.8"/><rect x="12" y="7" width="4.2" height="4.8" fill="#1e1e1e"/><rect x="17.6" y="6.2" width="2.6" height="2.6" fill="#1e1e1e"/><rect x="17.6" y="10.2" width="2.6" height="2.6" fill="#1e1e1e"/></svg>
<span class="t" style="left:1698.00px;top:206.00px;font-size:16.4px;line-height:22px;color:#1e1e1e;letter-spacing:0.383px;">Frameworks</span>
<svg class="b" style="left:1636.80px;top:235.86px;" width="9" height="15" viewBox="0 0 9 15"><path d="M1.3 2.3 L6.4 7.5 L1.3 12.7 Z" fill="none" stroke="#1e1e1e" stroke-width="1.5" stroke-linejoin="miter"/></svg>
<svg class="b" style="left:1666.00px;top:232.76px;" width="24" height="24" viewBox="0 0 24 24"><circle cx="5.2" cy="2.6" r="1.4" fill="#1e1e1e"/><rect x="7.4" y="5" width="16.2" height="16" rx="4.6" fill="#1e1e1e"/><circle cx="11.6" cy="9.4" r="2" fill="#f8f9fe"/><circle cx="18.5" cy="15.4" r="3.2" fill="#f8f9fe"/></svg>
<span class="t" style="left:1698.00px;top:235.00px;font-size:16.4px;line-height:22px;color:#1e1e1e;letter-spacing:0.002px;">Packages</span>
<svg class="b" style="left:1610.30px;top:264.00px;" width="9" height="15" viewBox="0 0 9 15"><path d="M1.3 2.3 L6.4 7.5 L1.3 12.7 Z" fill="none" stroke="#1e1e1e" stroke-width="1.5" stroke-linejoin="miter"/></svg>
<svg class="b" style="left:1641.50px;top:262.90px;" width="23" height="19" viewBox="0 0 23 19"><path d="M1.9 2 H9.4 L11 4.3 H21.2 V16.5 H1.9 Z" fill="#dfc07a" stroke="#b9973f" stroke-width="1.3" stroke-linejoin="round"/><path d="M2.4 6 H9.6 L11 4.4" fill="none" stroke="#b9973f" stroke-width="1"/></svg>
<span class="t" style="left:1672.40px;top:263.00px;font-size:16.4px;line-height:22px;color:#1e1e1e;letter-spacing:0.725px;">Attributes</span>
<svg class="b" style="left:1610.00px;top:295.04px;" width="10" height="10" viewBox="0 0 10 10"><path d="M9.5 0.5 V9.5 H0.5 Z" fill="#1e1e1e"/></svg>
<svg class="b" style="left:1641.50px;top:291.04px;" width="23" height="19" viewBox="0 0 23 19"><path d="M1.9 2 H9.4 L11 4.3 H21.2 V16.5 H1.9 Z" fill="#dfc07a" stroke="#b9973f" stroke-width="1.3" stroke-linejoin="round"/><path d="M2.4 6 H9.6 L11 4.4" fill="none" stroke="#b9973f" stroke-width="1"/></svg>
<span class="t" style="left:1672.40px;top:291.00px;font-size:16.4px;line-height:22px;color:#1e1e1e;letter-spacing:0.061px;">BusinessObjects</span>
<svg class="b" style="left:1636.80px;top:376.56px;" width="9" height="15" viewBox="0 0 9 15"><path d="M1.3 2.3 L6.4 7.5 L1.3 12.7 Z" fill="none" stroke="#1e1e1e" stroke-width="1.5" stroke-linejoin="miter"/></svg>
<svg class="b" style="left:1668.00px;top:377.46px;" width="24" height="18" viewBox="0 0 24 18"><text x="0.7" y="13.3" font-family="Liberation Sans, sans-serif" font-weight="bold" font-size="16.6" fill="#2d7d33" textLength="10.2" lengthAdjust="spacingAndGlyphs">C</text><text x="12.6" y="10.2" font-family="Liberation Sans, sans-serif" font-weight="bold" font-size="11.8" fill="#2d7d33" textLength="9.2" lengthAdjust="spacingAndGlyphs">#</text></svg>
<span class="t" style="left:1698.00px;top:375.00px;font-size:16.4px;line-height:22px;color:#1e1e1e;letter-spacing:0.049px;">Crest.cs</span>
<svg class="b" style="left:1636.80px;top:404.70px;" width="9" height="15" viewBox="0 0 9 15"><path d="M1.3 2.3 L6.4 7.5 L1.3 12.7 Z" fill="none" stroke="#1e1e1e" stroke-width="1.5" stroke-linejoin="miter"/></svg>
<svg class="b" style="left:1668.00px;top:405.60px;" width="24" height="18" viewBox="0 0 24 18"><text x="0.7" y="13.3" font-family="Liberation Sans, sans-serif" font-weight="bold" font-size="16.6" fill="#2d7d33" textLength="10.2" lengthAdjust="spacingAndGlyphs">C</text><text x="12.6" y="10.2" font-family="Liberation Sans, sans-serif" font-weight="bold" font-size="11.8" fill="#2d7d33" textLength="9.2" lengthAdjust="spacingAndGlyphs">#</text></svg>
<span class="t" style="left:1698.00px;top:403.00px;font-size:16.4px;line-height:22px;color:#1e1e1e;letter-spacing:0.446px;">Customer.cs</span>
<svg class="b" style="left:1636.80px;top:432.84px;" width="9" height="15" viewBox="0 0 9 15"><path d="M1.3 2.3 L6.4 7.5 L1.3 12.7 Z" fill="none" stroke="#1e1e1e" stroke-width="1.5" stroke-linejoin="miter"/></svg>
<svg class="b" style="left:1668.00px;top:433.74px;" width="24" height="18" viewBox="0 0 24 18"><text x="0.7" y="13.3" font-family="Liberation Sans, sans-serif" font-weight="bold" font-size="16.6" fill="#2d7d33" textLength="10.2" lengthAdjust="spacingAndGlyphs">C</text><text x="12.6" y="10.2" font-family="Liberation Sans, sans-serif" font-weight="bold" font-size="11.8" fill="#2d7d33" textLength="9.2" lengthAdjust="spacingAndGlyphs">#</text></svg>
<span class="t" style="left:1698.00px;top:432.00px;font-size:16.4px;line-height:22px;color:#1e1e1e;letter-spacing:0.610px;">CustomerCommunication.cs</span>
<svg class="b" style="left:1636.80px;top:460.98px;" width="9" height="15" viewBox="0 0 9 15"><path d="M1.3 2.3 L6.4 7.5 L1.3 12.7 Z" fill="none" stroke="#1e1e1e" stroke-width="1.5" stroke-linejoin="miter"/></svg>
<svg class="b" style="left:1668.00px;top:461.88px;" width="24" height="18" viewBox="0 0 24 18"><text x="0.7" y="13.3" font-family="Liberation Sans, sans-serif" font-weight="bold" font-size="16.6" fill="#2d7d33" textLength="10.2" lengthAdjust="spacingAndGlyphs">C</text><text x="12.6" y="10.2" font-family="Liberation Sans, sans-serif" font-weight="bold" font-size="11.8" fill="#2d7d33" textLength="9.2" lengthAdjust="spacingAndGlyphs">#</text></svg>
<span class="t" style="left:1698.00px;top:460.00px;font-size:16.4px;line-height:22px;color:#1e1e1e;letter-spacing:0.428px;">CustomerEmployee.cs</span>
<svg class="b" style="left:1636.80px;top:489.12px;" width="9" height="15" viewBox="0 0 9 15"><path d="M1.3 2.3 L6.4 7.5 L1.3 12.7 Z" fill="none" stroke="#1e1e1e" stroke-width="1.5" stroke-linejoin="miter"/></svg>
<svg class="b" style="left:1668.00px;top:490.02px;" width="24" height="18" viewBox="0 0 24 18"><text x="0.7" y="13.3" font-family="Liberation Sans, sans-serif" font-weight="bold" font-size="16.6" fill="#2d7d33" textLength="10.2" lengthAdjust="spacingAndGlyphs">C</text><text x="12.6" y="10.2" font-family="Liberation Sans, sans-serif" font-weight="bold" font-size="11.8" fill="#2d7d33" textLength="9.2" lengthAdjust="spacingAndGlyphs">#</text></svg>
<span class="t" style="left:1698.00px;top:488.00px;font-size:16.4px;line-height:22px;color:#1e1e1e;letter-spacing:0.364px;">CustomerStore.cs</span>
<svg class="b" style="left:1636.80px;top:517.26px;" width="9" height="15" viewBox="0 0 9 15"><path d="M1.3 2.3 L6.4 7.5 L1.3 12.7 Z" fill="none" stroke="#1e1e1e" stroke-width="1.5" stroke-linejoin="miter"/></svg>
<svg class="b" style="left:1668.00px;top:518.16px;" width="24" height="18" viewBox="0 0 24 18"><text x="0.7" y="13.3" font-family="Liberation Sans, sans-serif" font-weight="bold" font-size="16.6" fill="#2d7d33" textLength="10.2" lengthAdjust="spacingAndGlyphs">C</text><text x="12.6" y="10.2" font-family="Liberation Sans, sans-serif" font-weight="bold" font-size="11.8" fill="#2d7d33" textLength="9.2" lengthAdjust="spacingAndGlyphs">#</text></svg>
<span class="t" style="left:1698.00px;top:516.00px;font-size:16.4px;line-height:22px;color:#1e1e1e;letter-spacing:0.332px;">Employee.cs</span>
<svg class="b" style="left:1636.80px;top:545.40px;" width="9" height="15" viewBox="0 0 9 15"><path d="M1.3 2.3 L6.4 7.5 L1.3 12.7 Z" fill="none" stroke="#1e1e1e" stroke-width="1.5" stroke-linejoin="miter"/></svg>
<svg class="b" style="left:1668.00px;top:546.30px;" width="24" height="18" viewBox="0 0 24 18"><text x="0.7" y="13.3" font-family="Liberation Sans, sans-serif" font-weight="bold" font-size="16.6" fill="#2d7d33" textLength="10.2" lengthAdjust="spacingAndGlyphs">C</text><text x="12.6" y="10.2" font-family="Liberation Sans, sans-serif" font-weight="bold" font-size="11.8" fill="#2d7d33" textLength="9.2" lengthAdjust="spacingAndGlyphs">#</text></svg>
<span class="t" style="left:1698.00px;top:544.00px;font-size:16.4px;line-height:22px;color:#1e1e1e;letter-spacing:0.231px;">EmployeeTask.cs</span>
<svg class="b" style="left:1636.80px;top:573.54px;" width="9" height="15" viewBox="0 0 9 15"><path d="M1.3 2.3 L6.4 7.5 L1.3 12.7 Z" fill="none" stroke="#1e1e1e" stroke-width="1.5" stroke-linejoin="miter"/></svg>
<svg class="b" style="left:1668.00px;top:574.44px;" width="24" height="18" viewBox="0 0 24 18"><text x="0.7" y="13.3" font-family="Liberation Sans, sans-serif" font-weight="bold" font-size="16.6" fill="#2d7d33" textLength="10.2" lengthAdjust="spacingAndGlyphs">C</text><text x="12.6" y="10.2" font-family="Liberation Sans, sans-serif" font-weight="bold" font-size="11.8" fill="#2d7d33" textLength="9.2" lengthAdjust="spacingAndGlyphs">#</text></svg>
<span class="t" style="left:1698.00px;top:572.00px;font-size:16.4px;line-height:22px;color:#1e1e1e;letter-spacing:0.231px;">Evaluation.cs</span>
<svg class="b" style="left:1636.80px;top:601.68px;" width="9" height="15" viewBox="0 0 9 15"><path d="M1.3 2.3 L6.4 7.5 L1.3 12.7 Z" fill="none" stroke="#1e1e1e" stroke-width="1.5" stroke-linejoin="miter"/></svg>
<svg class="b" style="left:1668.00px;top:602.58px;" width="24" height="18" viewBox="0 0 24 18"><text x="0.7" y="13.3" font-family="Liberation Sans, sans-serif" font-weight="bold" font-size="16.6" fill="#2d7d33" textLength="10.2" lengthAdjust="spacingAndGlyphs">C</text><text x="12.6" y="10.2" font-family="Liberation Sans, sans-serif" font-weight="bold" font-size="11.8" fill="#2d7d33" textLength="9.2" lengthAdjust="spacingAndGlyphs">#</text></svg>
<span class="t" style="left:1698.00px;top:600.00px;font-size:16.4px;line-height:22px;color:#1e1e1e;letter-spacing:0.678px;">MapItem.cs</span>
<svg class="b" style="left:1636.80px;top:629.82px;" width="9" height="15" viewBox="0 0 9 15"><path d="M1.3 2.3 L6.4 7.5 L1.3 12.7 Z" fill="none" stroke="#1e1e1e" stroke-width="1.5" stroke-linejoin="miter"/></svg>
<svg class="b" style="left:1668.00px;top:630.72px;" width="24" height="18" viewBox="0 0 24 18"><text x="0.7" y="13.3" font-family="Liberation Sans, sans-serif" font-weight="bold" font-size="16.6" fill="#2d7d33" textLength="10.2" lengthAdjust="spacingAndGlyphs">C</text><text x="12.6" y="10.2" font-family="Liberation Sans, sans-serif" font-weight="bold" font-size="11.8" fill="#2d7d33" textLength="9.2" lengthAdjust="spacingAndGlyphs">#</text></svg>
<span class="t" style="left:1698.00px;top:629.00px;font-size:16.4px;line-height:22px;color:#1e1e1e;letter-spacing:0.859px;">Opportunity.cs</span>
<svg class="b" style="left:1636.80px;top:657.96px;" width="9" height="15" viewBox="0 0 9 15"><path d="M1.3 2.3 L6.4 7.5 L1.3 12.7 Z" fill="none" stroke="#1e1e1e" stroke-width="1.5" stroke-linejoin="miter"/></svg>
<svg class="b" style="left:1668.00px;top:658.86px;" width="24" height="18" viewBox="0 0 24 18"><text x="0.7" y="13.3" font-family="Liberation Sans, sans-serif" font-weight="bold" font-size="16.6" fill="#2d7d33" textLength="10.2" lengthAdjust="spacingAndGlyphs">C</text><text x="12.6" y="10.2" font-family="Liberation Sans, sans-serif" font-weight="bold" font-size="11.8" fill="#2d7d33" textLength="9.2" lengthAdjust="spacingAndGlyphs">#</text></svg>
<span class="t" style="left:1698.00px;top:657.00px;font-size:16.4px;line-height:22px;color:#1e1e1e;letter-spacing:0.508px;">Order.cs</span>
<svg class="b" style="left:1636.80px;top:686.10px;" width="9" height="15" viewBox="0 0 9 15"><path d="M1.3 2.3 L6.4 7.5 L1.3 12.7 Z" fill="none" stroke="#1e1e1e" stroke-width="1.5" stroke-linejoin="miter"/></svg>
<svg class="b" style="left:1668.00px;top:687.00px;" width="24" height="18" viewBox="0 0 24 18"><text x="0.7" y="13.3" font-family="Liberation Sans, sans-serif" font-weight="bold" font-size="16.6" fill="#2d7d33" textLength="10.2" lengthAdjust="spacingAndGlyphs">C</text><text x="12.6" y="10.2" font-family="Liberation Sans, sans-serif" font-weight="bold" font-size="11.8" fill="#2d7d33" textLength="9.2" lengthAdjust="spacingAndGlyphs">#</text></svg>
<span class="t" style="left:1698.00px;top:685.00px;font-size:16.4px;line-height:22px;color:#1e1e1e;letter-spacing:0.565px;">OrderItem.cs</span>
<svg class="b" style="left:1636.80px;top:714.24px;" width="9" height="15" viewBox="0 0 9 15"><path d="M1.3 2.3 L6.4 7.5 L1.3 12.7 Z" fill="none" stroke="#1e1e1e" stroke-width="1.5" stroke-linejoin="miter"/></svg>
<svg class="b" style="left:1668.00px;top:715.14px;" width="24" height="18" viewBox="0 0 24 18"><text x="0.7" y="13.3" font-family="Liberation Sans, sans-serif" font-weight="bold" font-size="16.6" fill="#2d7d33" textLength="10.2" lengthAdjust="spacingAndGlyphs">C</text><text x="12.6" y="10.2" font-family="Liberation Sans, sans-serif" font-weight="bold" font-size="11.8" fill="#2d7d33" textLength="9.2" lengthAdjust="spacingAndGlyphs">#</text></svg>
<span class="t" style="left:1698.00px;top:713.00px;font-size:16.4px;line-height:22px;color:#1e1e1e;letter-spacing:0.501px;">OutlookInspiredBaseObject.cs</span>
<svg class="b" style="left:1636.80px;top:742.38px;" width="9" height="15" viewBox="0 0 9 15"><path d="M1.3 2.3 L6.4 7.5 L1.3 12.7 Z" fill="none" stroke="#1e1e1e" stroke-width="1.5" stroke-linejoin="miter"/></svg>
<svg class="b" style="left:1668.00px;top:743.28px;" width="24" height="18" viewBox="0 0 24 18"><text x="0.7" y="13.3" font-family="Liberation Sans, sans-serif" font-weight="bold" font-size="16.6" fill="#2d7d33" textLength="10.2" lengthAdjust="spacingAndGlyphs">C</text><text x="12.6" y="10.2" font-family="Liberation Sans, sans-serif" font-weight="bold" font-size="11.8" fill="#2d7d33" textLength="9.2" lengthAdjust="spacingAndGlyphs">#</text></svg>
<span class="t" style="left:1698.00px;top:741.00px;font-size:16.4px;line-height:22px;color:#1e1e1e;letter-spacing:0.660px;">OutlookInspiredDbContext.cs</span>
<svg class="b" style="left:1636.80px;top:770.52px;" width="9" height="15" viewBox="0 0 9 15"><path d="M1.3 2.3 L6.4 7.5 L1.3 12.7 Z" fill="none" stroke="#1e1e1e" stroke-width="1.5" stroke-linejoin="miter"/></svg>
<svg class="b" style="left:1668.00px;top:771.42px;" width="24" height="18" viewBox="0 0 24 18"><text x="0.7" y="13.3" font-family="Liberation Sans, sans-serif" font-weight="bold" font-size="16.6" fill="#2d7d33" textLength="10.2" lengthAdjust="spacingAndGlyphs">C</text><text x="12.6" y="10.2" font-family="Liberation Sans, sans-serif" font-weight="bold" font-size="11.8" fill="#2d7d33" textLength="9.2" lengthAdjust="spacingAndGlyphs">#</text></svg>
<span class="t" style="left:1698.00px;top:769.00px;font-size:16.4px;line-height:22px;color:#1e1e1e;letter-spacing:0.241px;">Period.cs</span>
<svg class="b" style="left:1636.80px;top:798.66px;" width="9" height="15" viewBox="0 0 9 15"><path d="M1.3 2.3 L6.4 7.5 L1.3 12.7 Z" fill="none" stroke="#1e1e1e" stroke-width="1.5" stroke-linejoin="miter"/></svg>
<svg class="b" style="left:1668.00px;top:799.56px;" width="24" height="18" viewBox="0 0 24 18"><text x="0.7" y="13.3" font-family="Liberation Sans, sans-serif" font-weight="bold" font-size="16.6" fill="#2d7d33" textLength="10.2" lengthAdjust="spacingAndGlyphs">C</text><text x="12.6" y="10.2" font-family="Liberation Sans, sans-serif" font-weight="bold" font-size="11.8" fill="#2d7d33" textLength="9.2" lengthAdjust="spacingAndGlyphs">#</text></svg>
<span class="t" style="left:1698.00px;top:797.00px;font-size:16.4px;line-height:22px;color:#1e1e1e;letter-spacing:0.203px;">Picture.cs</span>
<svg class="b" style="left:1636.80px;top:826.80px;" width="9" height="15" viewBox="0 0 9 15"><path d="M1.3 2.3 L6.4 7.5 L1.3 12.7 Z" fill="none" stroke="#1e1e1e" stroke-width="1.5" stroke-linejoin="miter"/></svg>
<svg class="b" style="left:1668.00px;top:827.70px;" width="24" height="18" viewBox="0 0 24 18"><text x="0.7" y="13.3" font-family="Liberation Sans, sans-serif" font-weight="bold" font-size="16.6" fill="#2d7d33" textLength="10.2" lengthAdjust="spacingAndGlyphs">C</text><text x="12.6" y="10.2" font-family="Liberation Sans, sans-serif" font-weight="bold" font-size="11.8" fill="#2d7d33" textLength="9.2" lengthAdjust="spacingAndGlyphs">#</text></svg>
<span class="t" style="left:1698.00px;top:826.00px;font-size:16.4px;line-height:22px;color:#1e1e1e;letter-spacing:0.491px;">Probation.cs</span>
<svg class="b" style="left:1636.80px;top:854.94px;" width="9" height="15" viewBox="0 0 9 15"><path d="M1.3 2.3 L6.4 7.5 L1.3 12.7 Z" fill="none" stroke="#1e1e1e" stroke-width="1.5" stroke-linejoin="miter"/></svg>
<svg class="b" style="left:1668.00px;top:855.84px;" width="24" height="18" viewBox="0 0 24 18"><text x="0.7" y="13.3" font-family="Liberation Sans, sans-serif" font-weight="bold" font-size="16.6" fill="#2d7d33" textLength="10.2" lengthAdjust="spacingAndGlyphs">C</text><text x="12.6" y="10.2" font-family="Liberation Sans, sans-serif" font-weight="bold" font-size="11.8" fill="#2d7d33" textLength="9.2" lengthAdjust="spacingAndGlyphs">#</text></svg>
<span class="t" style="left:1698.00px;top:854.00px;font-size:16.4px;line-height:22px;color:#1e1e1e;letter-spacing:0.406px;">Product.cs</span>
<svg class="b" style="left:1636.80px;top:883.08px;" width="9" height="15" viewBox="0 0 9 15"><path d="M1.3 2.3 L6.4 7.5 L1.3 12.7 Z" fill="none" stroke="#1e1e1e" stroke-width="1.5" stroke-linejoin="miter"/></svg>
<svg class="b" style="left:1668.00px;top:883.98px;" width="24" height="18" viewBox="0 0 24 18"><text x="0.7" y="13.3" font-family="Liberation Sans, sans-serif" font-weight="bold" font-size="16.6" fill="#2d7d33" textLength="10.2" lengthAdjust="spacingAndGlyphs">C</text><text x="12.6" y="10.2" font-family="Liberation Sans, sans-serif" font-weight="bold" font-size="11.8" fill="#2d7d33" textLength="9.2" lengthAdjust="spacingAndGlyphs">#</text></svg>
<span class="t" style="left:1698.00px;top:882.00px;font-size:16.4px;line-height:22px;color:#1e1e1e;letter-spacing:0.445px;">ProductCatalog.cs</span>
<svg class="b" style="left:1636.80px;top:911.22px;" width="9" height="15" viewBox="0 0 9 15"><path d="M1.3 2.3 L6.4 7.5 L1.3 12.7 Z" fill="none" stroke="#1e1e1e" stroke-width="1.5" stroke-linejoin="miter"/></svg>
<svg class="b" style="left:1668.00px;top:912.12px;" width="24" height="18" viewBox="0 0 24 18"><text x="0.7" y="13.3" font-family="Liberation Sans, sans-serif" font-weight="bold" font-size="16.6" fill="#2d7d33" textLength="10.2" lengthAdjust="spacingAndGlyphs">C</text><text x="12.6" y="10.2" font-family="Liberation Sans, sans-serif" font-weight="bold" font-size="11.8" fill="#2d7d33" textLength="9.2" lengthAdjust="spacingAndGlyphs">#</text></svg>
<span class="t" style="left:1698.00px;top:910.00px;font-size:16.4px;line-height:22px;color:#1e1e1e;letter-spacing:0.500px;">ProductImage.cs</span>
<svg class="b" style="left:1636.80px;top:939.36px;" width="9" height="15" viewBox="0 0 9 15"><path d="M1.3 2.3 L6.4 7.5 L1.3 12.7 Z" fill="none" stroke="#1e1e1e" stroke-width="1.5" stroke-linejoin="miter"/></svg>
<svg class="b" style="left:1668.00px;top:940.26px;" width="24" height="18" viewBox="0 0 24 18"><text x="0.7" y="13.3" font-family="Liberation Sans, sans-serif" font-weight="bold" font-size="16.6" fill="#2d7d33" textLength="10.2" lengthAdjust="spacingAndGlyphs">C</text><text x="12.6" y="10.2" font-family="Liberation Sans, sans-serif" font-weight="bold" font-size="11.8" fill="#2d7d33" textLength="9.2" lengthAdjust="spacingAndGlyphs">#</text></svg>
<span class="t" style="left:1698.00px;top:938.00px;font-size:16.4px;line-height:22px;color:#1e1e1e;letter-spacing:0.549px;">Quote.cs</span>
<svg class="b" style="left:1636.80px;top:967.50px;" width="9" height="15" viewBox="0 0 9 15"><path d="M1.3 2.3 L6.4 7.5 L1.3 12.7 Z" fill="none" stroke="#1e1e1e" stroke-width="1.5" stroke-linejoin="miter"/></svg>
<svg class="b" style="left:1668.00px;top:968.40px;" width="24" height="18" viewBox="0 0 24 18"><text x="0.7" y="13.3" font-family="Liberation Sans, sans-serif" font-weight="bold" font-size="16.6" fill="#2d7d33" textLength="10.2" lengthAdjust="spacingAndGlyphs">C</text><text x="12.6" y="10.2" font-family="Liberation Sans, sans-serif" font-weight="bold" font-size="11.8" fill="#2d7d33" textLength="9.2" lengthAdjust="spacingAndGlyphs">#</text></svg>
<span class="t" style="left:1698.00px;top:966.00px;font-size:16.4px;line-height:22px;color:#1e1e1e;letter-spacing:0.366px;">QuoteAnalysis.cs</span>
<svg class="b" style="left:1636.80px;top:995.64px;" width="9" height="15" viewBox="0 0 9 15"><path d="M1.3 2.3 L6.4 7.5 L1.3 12.7 Z" fill="none" stroke="#1e1e1e" stroke-width="1.5" stroke-linejoin="miter"/></svg>
<svg class="b" style="left:1668.00px;top:996.54px;" width="24" height="18" viewBox="0 0 24 18"><text x="0.7" y="13.3" font-family="Liberation Sans, sans-serif" font-weight="bold" font-size="16.6" fill="#2d7d33" textLength="10.2" lengthAdjust="spacingAndGlyphs">C</text><text x="12.6" y="10.2" font-family="Liberation Sans, sans-serif" font-weight="bold" font-size="11.8" fill="#2d7d33" textLength="9.2" lengthAdjust="spacingAndGlyphs">#</text></svg>
<span class="t" style="left:1698.00px;top:994.00px;font-size:16.4px;line-height:22px;color:#1e1e1e;letter-spacing:0.668px;">QuoteItem.cs</span>
<svg class="b" style="left:1594.00px;top:139.40px;" width="18" height="26" viewBox="0 0 18 26"><path d="M1.3 1.4 V20.8 L5.6 16.8 L8.6 23.6 L11 22.6 L8.2 15.8 H15.4 Z" fill="#fff" stroke="#2b2b2b" stroke-width="1.1" stroke-linejoin="miter"/></svg>
<div class="b" style="left:1568.00px;top:1024.00px;width:146.00px;height:23.00px;background:#f5f6fb;"></div>
<span class="t" style="left:1574.40px;top:1028.00px;font-size:16.4px;line-height:22px;color:#1e1e1e;letter-spacing:0.481px;clip-path:inset(0 0 2.4px 0);">Solution Explorer</span>
<div class="b" style="left:1716.00px;top:1024.00px;width:110.50px;height:23.00px;background:#40568d;"></div>
<span class="t" style="left:1724.40px;top:1028.00px;font-size:16.4px;line-height:22px;color:#e4e9f8;letter-spacing:0.263px;clip-path:inset(0 0 2.4px 0);">Git Changes</span>
<div class="b" style="left:866.60px;top:297.40px;width:300.60px;height:280.00px;background:#f8f9fe;border:1.2px solid #f1dca6;box-sizing:border-box;"></div>
<svg class="b" style="left:869.00px;top:303.00px;" width="21" height="18" viewBox="0 0 21 18"><rect x="8.6" y="1.2" width="11" height="7.8" fill="#cbe6f8" stroke="#6d8fc8" stroke-width="1.4"/><path d="M11.4 3.9 H17 M11.4 6.5 H17" stroke="#5f93c4" stroke-width="1.2"/><rect x="1.3" y="8" width="11.6" height="8.8" fill="#0f63b1" stroke="#0f63b1" stroke-width="1"/><path d="M3.6 12.6 H10.6" stroke="#fff" stroke-width="1.7"/></svg>
<span class="t" style="left:896.90px;top:301.00px;font-size:16.4px;line-height:22px;color:#1e1e1e;letter-spacing:0.260px;">All</span>
<svg class="b" style="left:869.00px;top:330.35px;" width="21" height="18" viewBox="0 0 21 18"><rect x="8.6" y="1.2" width="11" height="7.8" fill="#cbe6f8" stroke="#6d8fc8" stroke-width="1.4"/><path d="M11.4 3.9 H17 M11.4 6.5 H17" stroke="#5f93c4" stroke-width="1.2"/><rect x="1.3" y="8" width="11.6" height="8.8" fill="#0f63b1" stroke="#0f63b1" stroke-width="1"/><path d="M3.6 12.6 H10.6" stroke="#fff" stroke-width="1.7"/></svg>
<span class="t" style="left:896.90px;top:328.00px;font-size:16.4px;line-height:22px;color:#1e1e1e;letter-spacing:0.078px;">DashboardCustomizationForm</span>
<svg class="b" style="left:869.00px;top:357.70px;" width="21" height="18" viewBox="0 0 21 18"><rect x="8.6" y="1.2" width="11" height="7.8" fill="#cbe6f8" stroke="#6d8fc8" stroke-width="1.4"/><path d="M11.4 3.9 H17 M11.4 6.5 H17" stroke="#5f93c4" stroke-width="1.2"/><rect x="1.3" y="8" width="11.6" height="8.8" fill="#0f63b1" stroke="#0f63b1" stroke-width="1"/><path d="M3.6 12.6 H10.6" stroke="#fff" stroke-width="1.7"/></svg>
<span class="t" style="left:896.90px;top:356.00px;font-size:16.4px;line-height:22px;color:#1e1e1e;letter-spacing:0.086px;">DetailView</span>
<svg class="b" style="left:869.00px;top:385.05px;" width="21" height="18" viewBox="0 0 21 18"><rect x="8.6" y="1.2" width="11" height="7.8" fill="#cbe6f8" stroke="#6d8fc8" stroke-width="1.4"/><path d="M11.4 3.9 H17 M11.4 6.5 H17" stroke="#5f93c4" stroke-width="1.2"/><rect x="1.3" y="8" width="11.6" height="8.8" fill="#0f63b1" stroke="#0f63b1" stroke-width="1"/><path d="M3.6 12.6 H10.6" stroke="#fff" stroke-width="1.7"/></svg>
<span class="t" style="left:896.90px;top:383.00px;font-size:16.4px;line-height:22px;color:#1e1e1e;letter-spacing:0.102px;">DetailViewCustomizationForm</span>
<svg class="b" style="left:869.00px;top:412.40px;" width="21" height="18" viewBox="0 0 21 18"><rect x="8.6" y="1.2" width="11" height="7.8" fill="#cbe6f8" stroke="#6d8fc8" stroke-width="1.4"/><path d="M11.4 3.9 H17 M11.4 6.5 H17" stroke="#5f93c4" stroke-width="1.2"/><rect x="1.3" y="8" width="11.6" height="8.8" fill="#0f63b1" stroke="#0f63b1" stroke-width="1"/><path d="M3.6 12.6 H10.6" stroke="#fff" stroke-width="1.7"/></svg>
<span class="t" style="left:896.90px;top:410.00px;font-size:16.4px;line-height:22px;color:#1e1e1e;letter-spacing:0.128px;">DetailViewEditor</span>
<svg class="b" style="left:869.00px;top:439.75px;" width="21" height="18" viewBox="0 0 21 18"><rect x="8.6" y="1.2" width="11" height="7.8" fill="#cbe6f8" stroke="#6d8fc8" stroke-width="1.4"/><path d="M11.4 3.9 H17 M11.4 6.5 H17" stroke="#5f93c4" stroke-width="1.2"/><rect x="1.3" y="8" width="11.6" height="8.8" fill="#0f63b1" stroke="#0f63b1" stroke-width="1"/><path d="M3.6 12.6 H10.6" stroke="#fff" stroke-width="1.7"/></svg>
<span class="t" style="left:896.90px;top:438.00px;font-size:16.4px;line-height:22px;color:#1e1e1e;letter-spacing:0.104px;">FilterEditor</span>
<svg class="b" style="left:869.00px;top:467.10px;" width="21" height="18" viewBox="0 0 21 18"><rect x="8.6" y="1.2" width="11" height="7.8" fill="#cbe6f8" stroke="#6d8fc8" stroke-width="1.4"/><path d="M11.4 3.9 H17 M11.4 6.5 H17" stroke="#5f93c4" stroke-width="1.2"/><rect x="1.3" y="8" width="11.6" height="8.8" fill="#0f63b1" stroke="#0f63b1" stroke-width="1"/><path d="M3.6 12.6 H10.6" stroke="#fff" stroke-width="1.7"/></svg>
<span class="t" style="left:896.90px;top:465.00px;font-size:16.4px;line-height:22px;color:#1e1e1e;letter-spacing:-0.031px;">ListView</span>
<svg class="b" style="left:869.00px;top:494.45px;" width="21" height="18" viewBox="0 0 21 18"><rect x="8.6" y="1.2" width="11" height="7.8" fill="#cbe6f8" stroke="#6d8fc8" stroke-width="1.4"/><path d="M11.4 3.9 H17 M11.4 6.5 H17" stroke="#5f93c4" stroke-width="1.2"/><rect x="1.3" y="8" width="11.6" height="8.8" fill="#0f63b1" stroke="#0f63b1" stroke-width="1"/><path d="M3.6 12.6 H10.6" stroke="#fff" stroke-width="1.7"/></svg>
<span class="t" style="left:896.90px;top:492.00px;font-size:16.4px;line-height:22px;color:#1e1e1e;letter-spacing:0.020px;">ListViewColumn</span>
<svg class="b" style="left:869.00px;top:521.80px;" width="21" height="18" viewBox="0 0 21 18"><rect x="8.6" y="1.2" width="11" height="7.8" fill="#cbe6f8" stroke="#6d8fc8" stroke-width="1.4"/><path d="M11.4 3.9 H17 M11.4 6.5 H17" stroke="#5f93c4" stroke-width="1.2"/><rect x="1.3" y="8" width="11.6" height="8.8" fill="#0f63b1" stroke="#0f63b1" stroke-width="1"/><path d="M3.6 12.6 H10.6" stroke="#fff" stroke-width="1.7"/></svg>
<span class="t" style="left:896.90px;top:520.00px;font-size:16.4px;line-height:22px;color:#1e1e1e;letter-spacing:0.067px;">ListViewCustomizationForm</span>
<div class="b" style="left:1142.50px;top:298.60px;width:23.50px;height:238.00px;background:#eeeef3;"></div>
<svg class="b" style="left:1148.50px;top:305.50px;" width="13" height="8" viewBox="0 0 13 8"><path d="M0.5 7.5 L6.5 0.8 L12.5 7.5 Z" fill="#828896"/></svg>
<svg class="b" style="left:1148.50px;top:520.50px;" width="13" height="8" viewBox="0 0 13 8"><path d="M0.5 0.5 L6.5 7.2 L12.5 0.5 Z" fill="#828896"/></svg>
<div class="b" style="left:1148.00px;top:381.00px;width:13.00px;height:95.50px;background:#c6c6ca;"></div>
<div class="b" style="left:867.80px;top:536.40px;width:298.20px;height:40.00px;background:#fafbff;border-top:1.2px solid #f1dca6;box-sizing:border-box;"></div>
<div class="b" style="left:906.60px;top:536.40px;width:2.40px;height:40.00px;background:#eec674;"></div>
<svg class="b" style="left:876.00px;top:546.00px;" width="22" height="21" viewBox="0 0 22 21"><path d="M2.3 6.8 V2.2 H7 M14.2 2.2 H18.9 V6.8 M18.9 13.9 V18.5 H14.2 M7 18.5 H2.3 V13.9" fill="none" stroke="#222" stroke-width="1.8"/><path d="M10.6 4.4 V16.4 M4.6 10.4 H16.6" stroke="#2e7d32" stroke-width="1.3"/></svg>
<svg class="b" style="left:918.30px;top:548.00px;" width="22" height="19" viewBox="0 0 22 19"><rect x="8.6" y="1.2" width="11" height="7.8" fill="#cbe6f8" stroke="#6d8fc8" stroke-width="1.4"/><path d="M11.4 3.9 H17 M11.4 6.5 H17" stroke="#5f93c4" stroke-width="1.2"/><rect x="1.3" y="8" width="11.6" height="8.8" fill="#0f63b1" stroke="#0f63b1" stroke-width="1"/><path d="M3.6 12.6 H10.6" stroke="#fff" stroke-width="1.7"/></svg>
<svg class="b" style="left:957.00px;top:546.00px;" width="23" height="23" viewBox="0 0 23 23"><path d="M2.3 6.2 V2.2 H9.9 V15.6 H2.3 V12.6" fill="none" stroke="#222" stroke-width="1.7"/><path d="M12.4 6.8 H19.8 V10.2 M19.8 16.6 V19.6 H12.5 V16" fill="none" stroke="#222" stroke-width="1.7"/><path d="M0.4 9.4 H7.4 M4.8 6.6 L7.6 9.4 L4.8 12.2" fill="none" stroke="#2b6cb8" stroke-width="1.5"/><path d="M21.8 13.4 H14.8 M17.4 10.6 L14.6 13.4 L17.4 16.2" fill="none" stroke="#2b6cb8" stroke-width="1.5"/></svg>
<div class="b" style="left:1168.60px;top:298.20px;width:868.00px;height:77.40px;background:#f7f9fe;border:1.2px solid #b3b8c8;border-right:none;box-sizing:border-box;"></div>
<span class="t" style="left:1174.60px;top:305.00px;font-size:16.4px;line-height:22px;color:#1e1e1e;letter-spacing:0.066px;"><span style="color:#398fa9">HideInUI</span>.All = <span style="color:#398fa9">HideInUI</span>.ModelMember | <span style="color:#398fa9">HideInUI</span>.ListView | <span style="color:#398fa9">HideInUI</span>.DetailView | <span style="color:#398fa9">HideInUI</span>.ReportCustomizationForm</span>
<span class="t" style="left:1174.60px;top:327.00px;font-size:16.4px;line-height:22px;color:#1e1e1e;letter-spacing:0.054px;"><span style="color:#398fa9">HideInUI</span>.DashboardCustomizationForm</span>
<span class="t d" style="left:1174.80px;top:351.00px;font-size:14.2px;line-height:20px;color:#1e1e1e;">★</span>
<span class="t" style="left:1197.60px;top:349.00px;font-size:16.4px;line-height:22px;color:#1e1e1e;letter-spacing:0.165px;">IntelliCode suggestion based on this context</span>
</div>
</body></html>
